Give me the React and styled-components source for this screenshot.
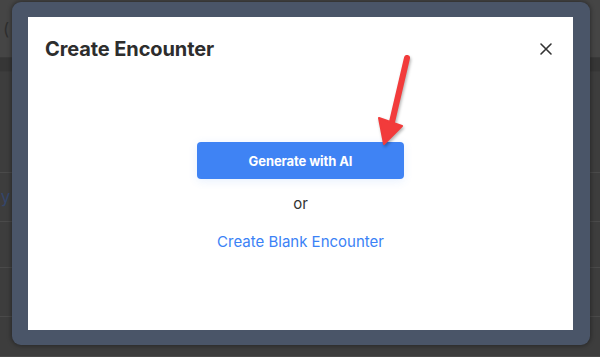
import React from 'react'
import styled, { createGlobalStyle } from 'styled-components'

const GlobalStyle = createGlobalStyle`
	html, body {
		margin: 0;
		padding: 0;
		width: 600px;
		height: 357px;
		overflow: hidden;
		background: #3d3d3d;
		font-family: Inter, "Noto Sans", "Liberation Sans", sans-serif;
	}
`;

const Screen = styled.div`
	position: relative;
	width: 600px;
	height: 357px;
	overflow: hidden;
	background: #3c3c3c;
`;

/* dimmed page behind the dialog */
const PageBehind = styled.div`
	display: flex;
	flex-direction: column;
	height: 100%;
`;

const PageBar = styled.div`
	height: ${props => props.h}px;
	background: ${props => props.bg || '#3d3d3d'};
	border-bottom: 1px solid ${props => props.line || '#4a4a4a'};
	color: ${props => props.ink || '#34466b'};
	font-size: 17px;
	line-height: ${props => props.h}px;
	text-indent: ${props => props.indent || 0}px;
	white-space: nowrap;
	box-sizing: border-box;
`;

const ModalFrame = styled.div`
	position: absolute;
	left: 12px;
	top: 2px;
	width: 578px;
	height: 343px;
	box-sizing: border-box;
	padding: 15px 17px 15px 16px;
	background: #4a5568;
	border-radius: 9px;
	box-shadow: 0 0 4px 1px rgba(0, 0, 0, 0.35);
	display: flex;
`;

const Dialog = styled.div`
	position: relative;
	flex: 1;
	background: #ffffff;
	display: flex;
	flex-direction: column;
`;

const Header = styled.div`
	display: flex;
	align-items: center;
	justify-content: space-between;
	padding: 20px 20px 0 17px;
	height: 24px;
`;

const Title = styled.h2`
	margin: 0;
	font-size: 20px;
	font-weight: 700;
	letter-spacing: -0.1px;
	color: #2d2d2d;
`;

const CloseButton = styled.button`
	border: 0;
	background: none;
	padding: 0;
	width: 14px;
	height: 14px;
	display: flex;
	cursor: pointer;
`;

const Body = styled.div`
	display: flex;
	flex-direction: column;
	align-items: center;
	padding-top: 81px;
`;

const PrimaryButton = styled.button`
	width: 207px;
	height: 37px;
	border: 0;
	border-radius: 4px;
	background: #3f83f4;
	color: #ffffff;
	font-family: inherit;
	font-size: 13px;
	font-weight: 700;
	letter-spacing: -0.1px;
	box-shadow: 0 2px 10px rgba(59, 130, 246, 0.12);
	cursor: pointer;
`;

const OrText = styled.div`
	margin-top: 16px;
	font-size: 15px;
	color: #333;
	line-height: 18px;
`;

const LinkButton = styled.button`
	margin-top: 19px;
	border: 0;
	background: none;
	padding: 0;
	font-family: inherit;
	font-size: 15px;
	color: #3b82f6;
	cursor: pointer;
`;

const Pointer = styled.svg`
	position: absolute;
	left: 345px;
	top: 35px;
	overflow: visible;
	filter: drop-shadow(1px 2px 1.5px rgba(0, 0, 0, 0.3));
`;

export default function App() {
	return (
		<Screen>
			<GlobalStyle />
			<PageBehind>
				<PageBar h={58} bg="#454545" line="#3a3a3a" ink="#2e2e2e" indent={3}>(</PageBar>
				<PageBar h={14} bg="#363636" line="#3a3a3a" />
				<PageBar h={101} />
				<PageBar h={49} indent={-6}>ry</PageBar>
				<PageBar h={46} />
				<PageBar h={49} />
				<PageBar h={40} />
			</PageBehind>

			<ModalFrame>
				<Dialog>
					<Header>
						<Title>Create Encounter</Title>
						<CloseButton aria-label="Close">
							<svg width="14" height="14" viewBox="0 0 14 14">
								<path d="M2 2 L12 12 M12 2 L2 12" stroke="#333" strokeWidth="1.6" strokeLinecap="round" />
							</svg>
						</CloseButton>
					</Header>
					<Body>
						<PrimaryButton>Generate with AI</PrimaryButton>
						<OrText>or</OrText>
						<LinkButton>Create Blank Encounter</LinkButton>
					</Body>
					<Pointer width="60" height="110" viewBox="0 0 60 110">
						<path d="M34 6 L19 70" stroke="#f23b3b" strokeWidth="6" strokeLinecap="round" fill="none" />
						<path d="M6 66 L29 74 L11 92 Z" fill="#f23b3b" stroke="#f23b3b" strokeWidth="2" strokeLinejoin="round" />
					</Pointer>
				</Dialog>
			</ModalFrame>
		</Screen>
	)
}
